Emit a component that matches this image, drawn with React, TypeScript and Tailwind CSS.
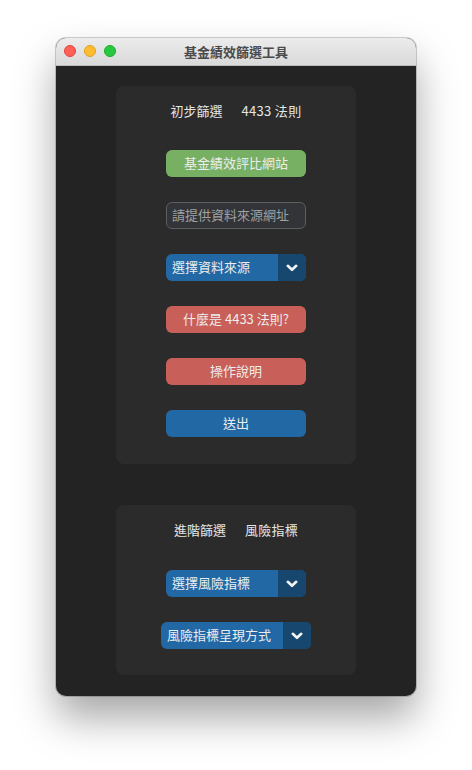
import React from 'react';

const font = { fontFamily: '"Noto Sans CJK TC", "Noto Sans", sans-serif' };

function Chevron() {
  return (
    <svg width="12" height="8" viewBox="0 0 12 8" fill="none">
      <path d="M1.8 1.8 L6 5.8 L10.2 1.8" stroke="#f2f2f2" strokeWidth="2.6" strokeLinecap="round" strokeLinejoin="round" />
    </svg>
  );
}

function Select({ label, wide }: { label: string; wide?: boolean }) {
  return (
    <div className={`flex h-[27px] rounded-[6px] overflow-hidden bg-[#2268a5] ${wide ? 'w-[150px]' : 'w-[140px]'}`}>
      <div className="flex-1 flex items-center pl-[6px] pb-[2px] text-[13px] text-[#ededed] leading-none">{label}</div>
      <div className="w-[28px] flex items-center justify-center bg-[#17476f]">
        <Chevron />
      </div>
    </div>
  );
}

function Btn({ label, color }: { label: string; color: string }) {
  return (
    <div className={`w-[140px] h-[27px] pb-[2px] rounded-[6px] flex items-center justify-center text-[13px] text-[#ededed] leading-none ${color}`}>
      {label}
    </div>
  );
}

function Heading({ left, right }: { left: string; right: string }) {
  return (
    <div className="flex justify-center gap-[19px] h-[18px] pb-[2px] items-center text-[13px] text-[#e6e6e6] leading-none">
      <span>{left}</span>
      <span className="tracking-[0.3px]">{right}</span>
    </div>
  );
}

export default function App() {
  return (
    <div className="w-[472px] h-[770px] bg-white overflow-hidden" style={font}>
      <div className="ml-[56px] mt-[38px] w-[360px] h-[658px] rounded-[10px] overflow-hidden flex flex-col bg-[#232323] shadow-[0_22px_40px_rgba(0,0,0,0.35),0_0_0_1px_rgba(0,0,0,0.18)]">
        {/* title bar */}
        <div className="h-[28px] shrink-0 relative flex items-center justify-center bg-gradient-to-b from-[#ececec] to-[#d9d9d9] border-b border-[#bdbdbd]">
          <div className="absolute left-[8px] top-[7px] flex gap-[8px]">
            <span className="w-[12px] h-[12px] rounded-full bg-[#fe5f57] border border-[#e0443e]" />
            <span className="w-[12px] h-[12px] rounded-full bg-[#febc2e] border border-[#dea123]" />
            <span className="w-[12px] h-[12px] rounded-full bg-[#28c840] border border-[#1aab29]" />
          </div>
          <span className="text-[13px] font-bold text-[#4a4a4a] leading-none">基金績效篩選工具</span>
        </div>

        <div className="flex flex-col items-center pt-[20px] gap-[41px]">
          {/* panel 1 */}
          <div className="w-[240px] rounded-[8px] bg-[#2b2b2b] pt-[16px] pb-[27px] flex flex-col items-center">
            <Heading left="初步篩選" right="4433 法則" />
            <div className="mt-[30px] flex flex-col items-center gap-[25px]">
              <Btn label="基金績效評比網站" color="bg-[#78b063]" />
              <div className="w-[140px] h-[27px] pb-[2px] rounded-[6px] border-[1.5px] border-[#5c5e61] bg-[#333437] flex items-center pl-[5px] text-[13px] text-[#a0a0a0] leading-none">
                請提供資料來源網址
              </div>
              <Select label="選擇資料來源" />
              <Btn label="什麼是 4433 法則?" color="bg-[#c85f58]" />
              <Btn label="操作說明" color="bg-[#c85f58]" />
              <Btn label="送出" color="bg-[#2268a5]" />
            </div>
          </div>

          {/* panel 2 */}
          <div className="w-[240px] rounded-[8px] bg-[#2b2b2b] pt-[16px] pb-[26px] flex flex-col items-center">
            <Heading left="進階篩選" right="風險指標" />
            <div className="mt-[31px] flex flex-col items-center gap-[25px]">
              <Select label="選擇風險指標" />
              <Select label="風險指標呈現方式" wide />
            </div>
          </div>
        </div>
      </div>
    </div>
  );
}
